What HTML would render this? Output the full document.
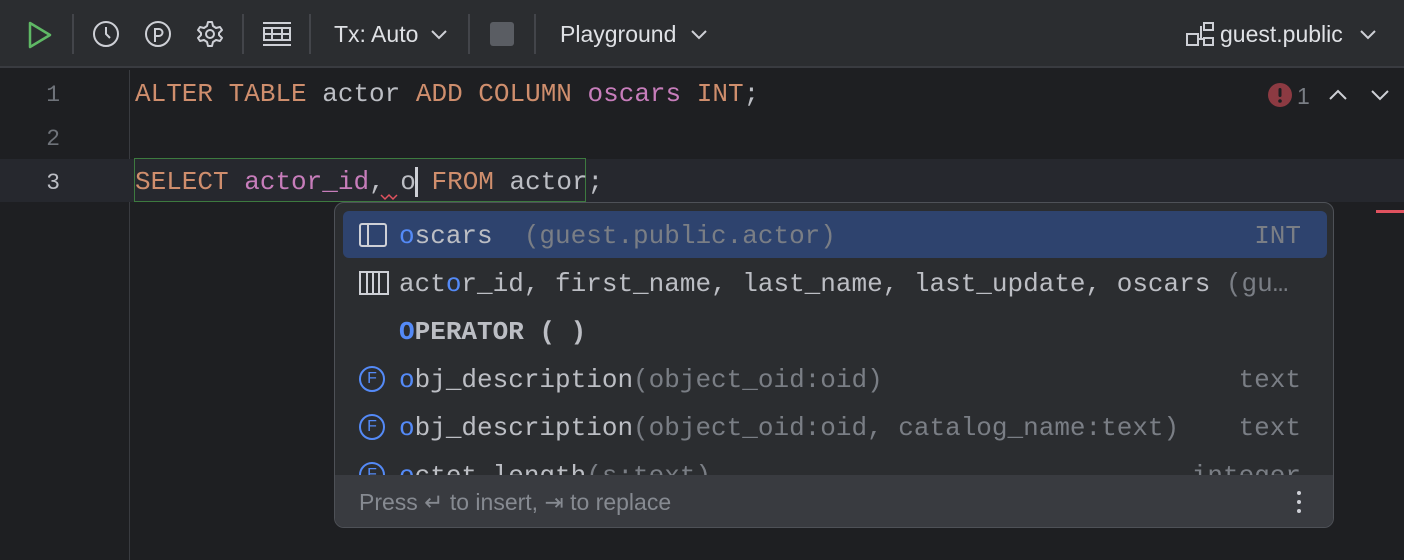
<!DOCTYPE html>
<html><head><meta charset="utf-8"><style>
*{margin:0;padding:0;box-sizing:border-box}
body{width:1404px;height:560px;background:#1e1f22;position:relative;overflow:hidden;font-family:"Liberation Sans",sans-serif;color:#dfe1e5}
.tb{position:absolute;left:0;top:0;width:1404px;height:68px;background:#2b2d30;border-bottom:2px solid #393b40}
.sep{position:absolute;top:14px;width:2px;height:40px;background:#43454a}
.t{position:absolute;top:21px;font-size:23px;color:#dfe1e5}
.mono{font-family:"Liberation Mono",monospace;font-size:26px;white-space:pre;position:absolute}
.ln{position:absolute;left:0;width:60px;text-align:right;font-family:"Liberation Mono",monospace;font-size:23px;color:#6f737a}
.k{color:#cf8e6d}.p{color:#c77dbb}.w{color:#bcbec4}
.pop{position:absolute;left:334px;top:202px;width:1000px;height:326px;background:#2b2d30;border:1px solid #4e5157;border-radius:10px;overflow:hidden}
.row{position:absolute;left:8px;width:984px;height:47px}
.row .mono{top:10px;left:56px;color:#bcbec4}
.b{color:#548af7}.g{color:#7a7e85}
.r{position:absolute;right:26px;top:10px;font-family:"Liberation Mono",monospace;font-size:26px;color:#7a7e85}
.fi{position:absolute;left:16px;top:11px;width:26px;height:26px;border:2px solid #548af7;border-radius:50%;color:#548af7;font-size:16px;text-align:center;line-height:22px}
</style></head><body>
<div class="tb">
<svg style="position:absolute;left:27px;top:21px" width="26" height="28"><path d="M3 2 L23 14 L3 26 Z" fill="none" stroke="#5fb865" stroke-width="2.5" stroke-linejoin="round"/></svg>
<div class="sep" style="left:72px"></div>
<svg style="position:absolute;left:92px;top:20px" width="28" height="28"><circle cx="14" cy="14" r="12" fill="none" stroke="#ced0d6" stroke-width="2"/><path d="M14 7v7l4 4" fill="none" stroke="#ced0d6" stroke-width="2"/></svg>
<svg style="position:absolute;left:144px;top:20px" width="28" height="28"><circle cx="14" cy="14" r="12" fill="none" stroke="#ced0d6" stroke-width="2"/><path d="M11 22V9h4a3.5 3.5 0 0 1 0 7h-4" fill="none" stroke="#ced0d6" stroke-width="2"/></svg>
<svg style="position:absolute;left:195px;top:19px" width="30" height="30"><path d="M13 3h4l1 4 3 2 4-1 2 3-3 3v2l3 3-2 3-4-1-3 2-1 4h-4l-1-4-3-2-4 1-2-3 3-3v-2l-3-3 2-3 4 1 3-2z" fill="none" stroke="#ced0d6" stroke-width="2" stroke-linejoin="round"/><circle cx="15" cy="15" r="4" fill="none" stroke="#ced0d6" stroke-width="2"/></svg>
<div class="sep" style="left:242px"></div>
<svg style="position:absolute;left:261px;top:21px" width="32" height="26"><path d="M2 2h28M2 24h28M3 7h26v12H3zM3 13h26M11 7v12M21 7v12" fill="none" stroke="#ced0d6" stroke-width="2"/></svg>
<div class="sep" style="left:309px"></div>
<div class="t" style="left:334px">Tx: Auto</div>
<svg style="position:absolute;left:430px;top:29px" width="18" height="12"><path d="M2 2l7 7 7-7" fill="none" stroke="#ced0d6" stroke-width="2"/></svg>
<div class="sep" style="left:468px"></div>
<div style="position:absolute;left:490px;top:22px;width:24px;height:24px;border-radius:3px;background:#5a5d63"></div>
<div class="sep" style="left:534px"></div>
<div class="t" style="left:560px">Playground</div>
<svg style="position:absolute;left:690px;top:29px" width="18" height="12"><path d="M2 2l7 7 7-7" fill="none" stroke="#ced0d6" stroke-width="2"/></svg>
<svg style="position:absolute;left:1185px;top:21px" width="30" height="26"><path d="M2 13h11v11H2zM19 2h9v7h-9zM19 17h9v7h-9zM13 18h6M16 5v13" fill="none" stroke="#ced0d6" stroke-width="2"/></svg>
<div class="t" style="left:1220px">guest.public</div>
<svg style="position:absolute;left:1359px;top:29px" width="18" height="12"><path d="M2 2l7 7 7-7" fill="none" stroke="#ced0d6" stroke-width="2"/></svg>
</div>
<div style="position:absolute;left:129px;top:70px;width:1px;height:490px;background:#393b40"></div>
<div style="position:absolute;left:0;top:159px;width:1404px;height:43px;background:#26282e"></div>
<div class="ln" style="top:82px">1</div>
<div class="ln" style="top:126px">2</div>
<div class="ln" style="top:170px;color:#bcbec4">3</div>
<div class="mono" style="left:135px;top:79px"><span class="k">ALTER TABLE</span> <span class="w">actor</span> <span class="k">ADD COLUMN</span> <span class="p">oscars</span> <span class="k">INT</span><span class="w">;</span></div>
<div style="position:absolute;left:134px;top:158px;width:452px;height:44px;border:1.5px solid #3d7a3f"></div>
<div class="mono" style="left:135px;top:167px"><span class="k">SELECT</span> <span class="p">actor_id</span><span class="w">,</span> <span class="w">o</span> <span class="k">FROM</span> <span class="w">actor;</span></div>
<svg style="position:absolute;left:380px;top:193px" width="20" height="8"><path d="M1 2l4 4 4-4 4 4 4-4" fill="none" stroke="#e0525f" stroke-width="1.5"/></svg>
<div style="position:absolute;left:415px;top:167px;width:3px;height:30px;background:#ced0d6"></div>
<svg style="position:absolute;left:1267px;top:82px" width="26" height="26"><circle cx="13" cy="13" r="12" fill="#8c3a42"/><rect x="11.5" y="6" width="3" height="9" rx="1.5" fill="#1e1f22"/><circle cx="13" cy="19" r="1.8" fill="#1e1f22"/></svg>
<div class="t" style="left:1297px;top:83px;color:#7a7e85">1</div>
<svg style="position:absolute;left:1328px;top:89px" width="20" height="12"><path d="M2 10l8-8 8 8" fill="none" stroke="#ced0d6" stroke-width="2"/></svg>
<svg style="position:absolute;left:1370px;top:89px" width="20" height="12"><path d="M2 2l8 8 8-8" fill="none" stroke="#ced0d6" stroke-width="2"/></svg>
<div style="position:absolute;left:1376px;top:210px;width:28px;height:3px;background:#e0525f"></div>
<div class="pop">
<div class="row" style="top:8px;background:#2e436e;border-radius:6px">
<svg style="position:absolute;left:16px;top:12px" width="28" height="24"><rect x="1" y="1" width="26" height="22" rx="2" fill="none" stroke="#ced0d6" stroke-width="2"/><path d="M9 1v22" stroke="#ced0d6" stroke-width="2"/></svg>
<div class="mono"><span class="b">o</span>scars  <span class="g">(guest.public.actor)</span></div><div class="r">INT</div></div>
<div class="row" style="top:56px">
<svg style="position:absolute;left:16px;top:12px" width="30" height="24"><rect x="1" y="1" width="28" height="22" fill="none" stroke="#ced0d6" stroke-width="2"/><path d="M8 1v22M14 1v22M20 1v22" stroke="#ced0d6" stroke-width="2"/></svg>
<div class="mono">act<span class="b">o</span>r_id, first_name, last_name, last_update, oscars <span class="g">(gu…</span></div></div>
<div class="row" style="top:104px"><div class="mono" style="font-weight:bold"><span class="b">O</span>PERATOR ( )</div></div>
<div class="row" style="top:152px"><div class="fi">F</div><div class="mono"><span class="b">o</span>bj_description<span class="g">(object_oid:oid)</span></div><div class="r">text</div></div>
<div class="row" style="top:200px"><div class="fi">F</div><div class="mono"><span class="b">o</span>bj_description<span class="g">(object_oid:oid, catalog_name:text)</span></div><div class="r">text</div></div>
<div class="row" style="top:248px"><div class="fi">F</div><div class="mono"><span class="b">o</span>ctet_length<span class="g">(s:text)</span></div><div class="r">integer</div></div>
<div style="position:absolute;left:0;top:272px;width:1000px;height:54px;background:#393b40">
<div style="position:absolute;left:24px;top:14px;font-size:23px;color:#868a91">Press ↵ to insert, ⇥ to replace</div>
<div style="position:absolute;left:962px;top:16px;width:4px;height:4px;border-radius:2px;background:#ced0d6;box-shadow:0 9px 0 #ced0d6,0 18px 0 #ced0d6"></div>
</div>
</div>
</body></html>
